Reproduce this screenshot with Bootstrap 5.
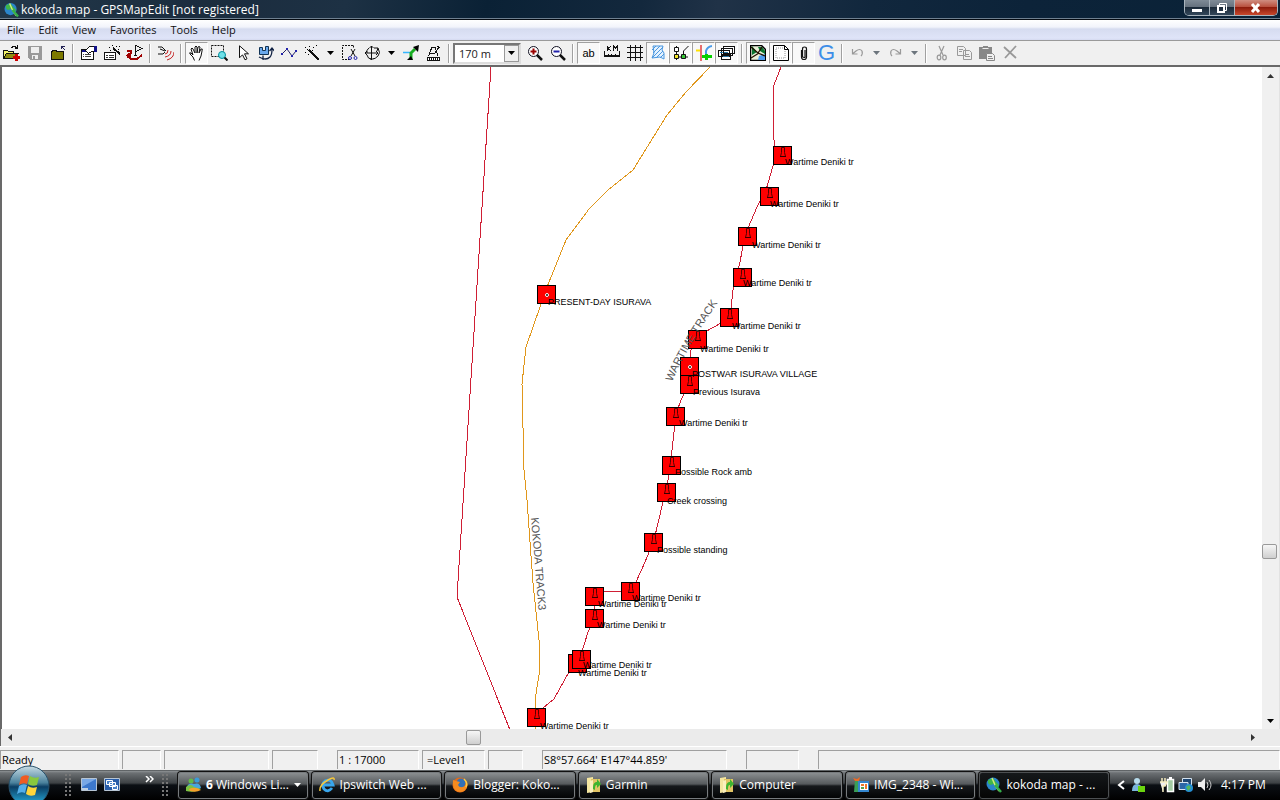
<!DOCTYPE html>
<html lang="en">
<head>
<meta charset="utf-8">
<meta name="viewport" content="width=device-width, initial-scale=1">
<title>kokoda map - GPSMapEdit [not registered]</title>
<link href="https://cdn.jsdelivr.net/npm/bootstrap@5.3.0/dist/css/bootstrap.min.css" rel="stylesheet">
<style>
body{font-family:"Open Sans","Noto Sans",sans-serif;font-size:12px;line-height:16px;color:#000;background:#f0f0f0}
button{font:inherit;border:0;padding:0;background:none;color:inherit}
svg{display:block;flex:none}
.titlebar{height:20px;gap:2px;padding:0 2px 0 4px;background:linear-gradient(100deg,#22384a 0,#1b2c3e 16%,#1d3144 27%,#0a2135 38%,#13283d 50%,#203247 56%,#11273d 68%,#0c2339 80%,#0a2237);border-bottom:1px solid #050b12;box-shadow:inset 0 -1px #6f8090;color:#fff}
.winbtns{height:16px;border:1px solid #a9b4bd;border-top:0;border-radius:0 0 5px 5px;overflow:hidden}
.winbtns button{width:25px;height:15px;background:linear-gradient(#7f8b96 0,#66727f 45%,#1b2a39 50%,#33475a);border-right:1px solid #a9b4bd;display:flex;align-items:center;justify-content:center}
.winbtns .close-btn{width:42px;border:0;background:linear-gradient(#cf8d80 0,#b9503e 45%,#8e1c0c 50%,#c9482c)}
.menubar{height:21px;background:linear-gradient(#fff 0,#f2f4fb 35%,#d6dcf0 45%,#dfe4f8 90%,#d5daf0);border-bottom:1px solid #9a9a9a;padding-left:7px;gap:14px;font-size:11px}
.menubar a{color:#111;text-decoration:none}
.tools{height:24px;background:#f0f0f0}
.tool{width:23px;height:22px;display:flex;align-items:center;justify-content:center}
.tool.pressed{background:#f8f8f8;border:1px solid;border-color:#a0a0a0 #fff #fff #a0a0a0}
.tool-ab{font:11px "Liberation Sans",sans-serif}
.tool-g{font:22px/20px "Liberation Sans",sans-serif;color:#3d8ee8}
.drop{width:15px;height:22px;display:flex;align-items:center;justify-content:center}
.rule{width:8px;height:19px;background:linear-gradient(90deg,transparent 3px,#a0a0a0 3px,#a0a0a0 4px,#fff 4px,#fff 5px,transparent 5px);flex:none}
.combo{width:68px;height:21px;border:2px solid;border-color:#777 #ddd #ddd #777;background:#fff;margin-right:2px}
.combo select{appearance:none;border:0;background:none;width:100%;height:17px;padding:0 0 0 4px;font:11px/17px "Open Sans",sans-serif;outline:0;color:#222}
.combo span{right:0;top:0;width:15px;height:17px;background:#f0f0f0;border:1px solid #999;pointer-events:none}
.workspace{border:solid #696969;border-width:2px 0 0 2px;background:#fff;min-height:0}
.vbar{width:18px;padding-right:1px;background:#f0f0f0;border-right:1px solid #e2e2e2}
.hbar{height:17px;background:#ebebeb;border-left:1px solid #696969;padding-right:19px}
.arrowbtn{width:17px;height:17px;display:flex;align-items:center;justify-content:center;flex:none}
.thumb{width:15px;height:15px;border:1px solid #999;border-radius:2px;background:linear-gradient(#f6f6f6,#cfcfcf);flex:none}
.statusline{height:24px;padding-top:3px;gap:3px;border-top:1px solid #fff;font-size:11px}
.pane{border:solid;border-width:1px 1px 0 1px;border-color:#a0a0a0 #fff #fff #a0a0a0;height:19px;line-height:18px;padding-left:1px;white-space:nowrap;flex:none}
.taskbar{height:30px;background:linear-gradient(#33373a 0,#8e9294 1px,#6c7073 3px,#3d4144 13px,#0b0f14 15px,#000 30px);color:#fff}
.startbtn{left:8px;bottom:-5px;width:44px;height:40px}
.grip{width:8px;height:24px;background:radial-gradient(circle,#777 0,#777 1px,transparent 1px) 0 0/4px 4px;flex:none}
.task{min-width:0;flex:1 1 0;height:27px;border:1px solid #777b7e;border-radius:3px;background:linear-gradient(#8a8e90 0,#565a5d 11px,#16191c 13px,#030405);box-shadow:0 0 0 1px #111;display:flex;align-items:center;gap:4px;padding:0 6px;white-space:nowrap}
.task.current{background:linear-gradient(#15181a,#050505);border-color:#4d5052}
.quick{width:178px;padding-left:64px}
.quick .grip:first-child{margin-right:9px}
.quick .switcher{margin-left:6px}
.quick .more{align-self:flex-start;margin-left:25px;padding-top:3px}
.quick .grip:last-child{margin-left:auto;margin-right:9px}
.tray{width:171px;padding-left:8px}
.tray .person{margin:0 13px 0 6px}
.tray .plug{margin-right:3px}
.maplabel{font:9px "Liberation Sans",sans-serif}
.trackname{font:11px "Liberation Sans",sans-serif;fill:#555}
</style>
<script src="https://cdn.jsdelivr.net/npm/bootstrap@5.3.0/dist/js/bootstrap.bundle.min.js"></script>
</head>
<body class="vh-100 d-flex flex-column overflow-hidden">
<svg width="0" height="0" class="position-absolute" aria-hidden="true">
<defs>
<g id="plainpin"><rect x=".5" y=".5" width="18" height="18" fill="#f00" stroke="#000"/></g>
<g id="pin"><use href="#plainpin"/><path d="M8.500 1.500h3v5l1 4h-5l1-4z" fill="none" stroke="#500"/><path d="M7 10.500h6" stroke="#300"/></g>
<g id="town"><use href="#plainpin"/><circle cx="10" cy="10" r="1.500" fill="#000" stroke="#fff"/></g>
<symbol id="down" viewBox="0 0 7 4"><path d="M0 0h7L3.500 4z" fill="currentColor"/></symbol>
<symbol id="globe" viewBox="0 0 16 16"><circle cx="7" cy="7" r="6.500" fill="#2a86cc"/><path d="M2 3l5-2 3 4 3 3-3 3-2-4-4 1-2-2z" fill="#3fb548"/><path d="M6 1l3 7 4 6" stroke="#d3ee7c" stroke-width="1.500" fill="none"/><path d="M9 8l6 7" stroke="#35b04a" stroke-width="2.500"/></symbol>
<symbol id="foldr" viewBox="0 0 16 16"><path d="M1 1l6-1v15l-6 1z" fill="#f5e6a0"/><path d="M5 2h9v13H5z" fill="#e2c465"/><path d="M4 4l3-1v12l-3 1z" fill="#fbf0bd"/><path d="M7 12c0-5 1-7 4-7V2l4 5-4 4V8c-2 0-2 2-2 5z" fill="#3fb52f"/></symbol>
<linearGradient id="orbfill" x2="0" y2="1"><stop offset="0" stop-color="#c9dde6"/><stop offset=".42" stop-color="#4a819c"/><stop offset=".52" stop-color="#0b3d63"/><stop offset="1" stop-color="#29b6e6"/></linearGradient>
</defs>
</svg>

<header class="titlebar d-flex align-items-center flex-shrink-0">
  <svg width="15" height="16"><use href="#globe"/></svg>
  <span class="flex-grow-1">kokoda map - GPSMapEdit [not registered]</span>
  <div class="winbtns d-flex align-self-start">
    <button aria-label="Minimize"><svg width="12" height="12"><path d="M1 7h10v3H1z" fill="#fff"/></svg></button>
    <button aria-label="Restore"><svg width="12" height="12" fill="none" stroke="#fff"><path d="M3.500 3V1.500h7v7H9"/><path d="M2 4h6v6H2z" stroke-width="2"/></svg></button>
    <button class="close-btn" aria-label="Close"><svg width="12" height="12"><path d="M2 2l7 8M9 2l-7 8" stroke="#fff" stroke-width="3"/></svg></button>
  </div>
</header>

<nav class="menubar d-flex align-items-center flex-shrink-0">
  <a href="#">File</a><a href="#">Edit</a><a href="#">View</a><a href="#">Favorites</a><a href="#">Tools</a><a href="#">Help</a>
</nav>

<div class="tools d-flex align-items-center flex-shrink-0" role="toolbar">
  <button class="tool" aria-label="Open"><svg width="17" height="16" shape-rendering="crispEdges"><path d="M.5 13.500v-8h4l1 1h5v2" fill="#f2f26a" stroke="#111"/><path d="M.5 13.500l3-5h12l-3 5z" fill="#8f8c10" stroke="#111"/><path d="M8 2.500h1v-1h3v1h2M14.500 0v4M12 3.500h3" stroke="#111" fill="none"/><path d="M13.500 9v7M10 12.500h7" stroke="#c00" stroke-width="3"/></svg></button>
  <button class="tool" aria-label="Save"><svg width="16" height="16" shape-rendering="crispEdges"><path d="M1 1h14v14H3l-2-2z" fill="#999"/><path d="M4 2h8v6H4zM5 10h6v4H5z" fill="#eee"/><path d="M6 11h2v3H6z" fill="#999"/></svg></button>
  <button class="tool" aria-label="Close map"><svg width="16" height="16" shape-rendering="crispEdges"><path d="M1.500 14.500v-8h1v-1h4v1h7v8z" fill="#7d7a00" stroke="#111"/><path d="M11 1.500h3.500M11.500 1v3M12 2l3 3" stroke="#225" fill="none"/></svg></button>
  <span class="rule"></span>
  <button class="tool" aria-label="Properties"><svg width="16" height="16" shape-rendering="crispEdges"><path d="M.5 4.500h12v10H.5z" fill="#fff" stroke="#111"/><path d="M1 5h7v2H1z" fill="#118"/><path d="M2 9.500h1m1 0h6M2 11.500h1m1 0h6" stroke="#444"/><path d="M4.500 5.500l4-4h5v5h-3l-3 2z" fill="#fff" stroke="#111"/><path d="M13 1h3v6h-3z" fill="#118"/></svg></button>
  <button class="tool" aria-label="Map wizard"><svg width="16" height="16" shape-rendering="crispEdges"><path d="M.5 7.500h11v7H.5z" fill="#fff" stroke="#111"/><path d="M2 10.500h2m1 0h5M2 12.500h2m1 0h5" stroke="#333"/><path d="M9 3l7 6" stroke="#111" stroke-width="2"/><path d="M5 2h1v1H5zM8 0h1v1H8zM12 1h1v1h-1zM6 5h1v1H6zM14 4h1v1h-1zM15 1h1v1h-1z"/></svg></button>
  <button class="tool" aria-label="Waypoints"><svg width="17" height="16" shape-rendering="crispEdges"><path d="M9.500 0v10M10 .5l6 3-6 3M8 10.500h3" stroke="#111" fill="none"/><path d="M1 6h4v2L2 10l3 1M1 11l4 3h6l5-4" stroke="#a00000" stroke-width="2" fill="none"/></svg></button>
  <span class="rule"></span>
  <button class="tool" aria-label="GPS"><svg width="16" height="16"><path d="M0 2h4l4 4M0 9h5l2-2M2 4l5 2" fill="none" stroke="#111"/><path d="M7 9q3 0 3-4M7 12q6-1 6-6M9 15q7-2 7-8" fill="none" stroke="#c42020"/></svg></button>
  <span class="rule"></span>
  <button class="tool pressed" aria-label="Pan"><svg width="16" height="16"><path d="M5.500 15.500L4 12 1 9q-1-2 1-1l2 2-2-6q1-2 2 0l2 4V2q1-2 2 0v6l1-6q1-1 2 0l-1 6 2-4q2-1 1 2l-1 5-2 4.500" fill="#fff" stroke="#111"/></svg></button>
  <button class="tool" aria-label="Zoom rectangle"><svg width="17" height="16"><path d="M.5.500h12v11H.5z" fill="none" stroke="#111" stroke-dasharray="2 1"/><circle cx="11" cy="10" r="3.500" fill="#6fe0e8" stroke="#0090a0"/><path d="M13.500 12.500l3 3" stroke="#111" stroke-width="2"/></svg></button>
  <button class="tool" aria-label="Select"><svg width="16" height="16"><path d="M4.500.8v12l3-3 2.500 5 2-1-2.500-5h4z" fill="#fff" stroke="#111"/></svg></button>
  <button class="tool" aria-label="Rotate object"><svg width="16" height="16"><path d="M1.500 2.500h3v3h3v-4h3v8h-9z" fill="#6aa9ee" stroke="#135"/><path d="M1 12q7 4 11 0 2-2 2-8M11.500 6L14 3l2.500 3M5 10.500v4.500" fill="none" stroke="#124" stroke-width="1.300"/></svg></button>
  <button class="tool" aria-label="Polyline"><svg width="16" height="16"><path d="M1 9l5-5 5 7 4-5" fill="none" stroke="#226"/><path d="M0 8h2v2H0zM5 3h2v2H5zM10 10h2v2h-2zM14 5h2v2h-2z" fill="#22a"/></svg></button>
  <button class="tool" aria-label="Wizard"><svg width="16" height="16" shape-rendering="crispEdges"><path d="M5 5l10 10" stroke="#111" stroke-width="2"/><path d="M1 2h1v1H1zM5 1h1v1H5zM9 2h1v1H9zM3 4h1v1H3zM8 5h1v1H8zM1 7h1v1H1zM4 9h1v1H4zM12 0h1v1h-1z"/></svg></button>
  <button class="drop" aria-label="Wizard options"><svg width="7" height="4"><use href="#down"/></svg></button>
  <button class="tool" aria-label="Trim"><svg width="16" height="16"><path d="M11 .5H.5v14h8M11.500.5v3" fill="none" stroke="#111" stroke-dasharray="2 1"/><path d="M9 4l4 7M13 4l-4 7" stroke="#111"/><circle cx="8" cy="13" r="1.500" fill="none" stroke="#22a"/><circle cx="13.500" cy="13" r="1.500" fill="none" stroke="#22a"/></svg></button>
  <button class="tool" aria-label="Move map"><svg width="17" height="16"><path d="M7.500 1v14M1 8h13M5.500 3l2-2 2 2M5.500 13l2 2 2-2M3 6L1 8l2 2M12 6l2 2-2 2" fill="none" stroke="#111"/><path d="M10 3h4l-1 3M14 3q3 5 0 8-3 3-5 3M5 3Q2 5 3 8M3 10q1 4 4 4" fill="none" stroke="#111"/></svg></button>
  <button class="drop" aria-label="Move options"><svg width="7" height="4"><use href="#down"/></svg></button>
  <button class="tool" aria-label="Connect"><svg width="16" height="16"><path d="M0 7.500h8" stroke="#36b6ff" stroke-width="1.500"/><path d="M8 15V8l4-4" fill="none" stroke="#18ad20" stroke-width="3"/><path d="M10 2l6-2-1 7z"/><path d="M4 15h6l-2-4z"/></svg></button>
  <button class="tool" aria-label="Measure"><svg width="16" height="16" shape-rendering="crispEdges"><path d="M1.500 12.500h12v3h-12z" fill="#fff" stroke="#111"/><path d="M3.500 13v2m2-2v2m2-2v2m2-2v2m2-2v2" stroke="#111"/><path d="M2.500 11L6 2h3l3 9M4 8h5M9 8l4-6M11 1l3 2" fill="none" stroke="#111"/></svg></button>
  <span class="rule"></span>
  <div class="combo position-relative"><select aria-label="Scale"><option>170 m</option></select><span class="position-absolute d-flex align-items-center justify-content-center"><svg width="7" height="4"><use href="#down"/></svg></span></div>
  <button class="tool" aria-label="Zoom in"><svg width="16" height="16"><circle cx="6.500" cy="6.500" r="5" fill="#fff" stroke="#112"/><path d="M10 10l5 5" stroke="#111" stroke-width="2.500"/><path d="M3.500 6.500h6M6.500 3.500v6" stroke="#900" stroke-width="2"/></svg></button>
  <button class="tool" aria-label="Zoom out"><svg width="16" height="16"><circle cx="6.500" cy="6.500" r="5" fill="#fff" stroke="#112"/><path d="M10 10l5 5" stroke="#111" stroke-width="2.500"/><path d="M3.500 6.500h6" stroke="#22a" stroke-width="2"/></svg></button>
  <span class="rule"></span>
  <button class="tool pressed tool-ab">ab</button>
  <button class="tool" aria-label="Ruler KM"><svg width="18" height="16" shape-rendering="crispEdges"><path d="M4.500 1v5M8 1L5 3.500 8 6M10.500 6V1l2 2 2-2v5" fill="none" stroke="#111"/><path d="M1.500 6v5h15V6M5.500 9v2m3-2v2m4-2v2M1 10.500h16" fill="none" stroke="#111"/></svg></button>
  <button class="tool" aria-label="Grid"><svg width="16" height="16" shape-rendering="crispEdges"><path d="M3.500 0v16M8.500 0v16M13.500 0v16M0 2.500h16M0 7.500h16M0 12.500h16" stroke="#111"/></svg></button>
  <button class="tool pressed" aria-label="Polygons"><svg width="14" height="16"><path d="M2 1h10l-1 4 2 3v6l-4-2-8 1 2-5z" fill="#e4f2ff"/><path d="M1 5l4-4M2 8l7-7M1 13L12 2M5 13l7-7M9 13l4-4M2 1h10l-1 4 2 3v6l-4-2-8 1 2-5z" fill="none" stroke="#4a97df"/></svg></button>
  <button class="tool pressed" aria-label="Nodes"><svg width="16" height="16"><path d="M3.500 1v14M4 12h11M10.500 12V6l5-5" fill="none" stroke="#111"/><path d="M1.500 2.500h4v4h-4z" fill="#fff" stroke="#111"/><path d="M1.500 9.500h4v4h-4z" fill="#f3e629" stroke="#111"/><path d="M8.500 9.500h4v4h-4z" fill="#36c636" stroke="#111"/></svg></button>
  <button class="tool pressed" aria-label="Roads"><svg width="16" height="16"><path d="M0 5.500h4" stroke="#ffe100" stroke-width="2"/><path d="M5 0v16" stroke="#e04040" stroke-width="1.500"/><path d="M10 11V6q1-4 6-5" fill="none" stroke="#4a9be8" stroke-width="2"/><path d="M6 11.500h10M10.500 9v6" stroke="#08d000" stroke-width="3"/></svg></button>
  <button class="tool pressed" aria-label="Windows"><svg width="17" height="16" shape-rendering="crispEdges"><g fill="#fff" stroke="#111"><path d="M5.500 1.500h11v7h-11zM3.500 3.500h11v7h-11zM.5 5.500h11v6H.5zM3.500 9.500h9v5h-9z"/></g><path d="M2 7.500h3m1 0h4M5 11.500h6" stroke="#2877a8"/></svg></button>
  <span class="rule"></span>
  <button class="tool pressed" aria-label="Background map"><svg width="16" height="16"><path d="M.5.500h11l4 4v11H.5z" fill="#e9efd8" stroke="#000" stroke-width="1.500"/><path d="M2 1l5 6-5 3zM8 2h4l3 4v3l-5-3z" fill="#08752f"/><path d="M8 15l1-4 6-2v6z" fill="#4d9df0"/><path d="M1 2l7 6 7 3M8 8l4-6M1 13l8-5" fill="none" stroke="#210" stroke-width="1.300"/></svg></button>
  <button class="tool pressed" aria-label="Blank map"><svg width="16" height="16"><path d="M.5.500h11l4 4v11H.5z" fill="#fff" stroke="#000"/><path d="M3 3h9v10H3z" fill="none" stroke="#999" stroke-dasharray="1 1"/><path d="M11.500.5v4h4" fill="none" stroke="#000"/></svg></button>
  <button class="tool pressed" aria-label="Attachments"><svg width="16" height="16"><path d="M5.500 5v7q0 2.500 2.500 2.500t2.500-2.500V4Q10.500 2 8.500 2T6.500 4v7q0 1.500 1.500 1.500T9 11V5" fill="none" stroke="#111" stroke-width="1.200"/></svg></button>
  <button class="tool tool-g">G</button>
  <span class="rule"></span>
  <button class="tool" aria-label="Undo" disabled><svg width="16" height="16"><path d="M2.500 4v5h5M3 8.500L6 6q4-3 6 0 1 3-1 5" fill="none" stroke="#999" stroke-width="1.200"/></svg></button>
  <button class="drop text-secondary" aria-label="Undo list" disabled><svg width="7" height="4"><use href="#down"/></svg></button>
  <button class="tool" aria-label="Redo" disabled><svg width="16" height="16"><path d="M12.500 4v5h-5M12 8.500L9 6Q5 3 3 6q-1 3 1 5" fill="none" stroke="#999" stroke-width="1.200"/></svg></button>
  <button class="drop text-secondary" aria-label="Redo list" disabled><svg width="7" height="4"><use href="#down"/></svg></button>
  <span class="rule"></span>
  <button class="tool" aria-label="Cut" disabled><svg width="14" height="16" fill="none" stroke="#999" stroke-width="1.200"><path d="M4 1l4 9M9 1L5 10"/><ellipse cx="4" cy="12.500" rx="1.800" ry="2.300"/><ellipse cx="9.500" cy="12.500" rx="1.800" ry="2.300"/></svg></button>
  <button class="tool" aria-label="Copy" disabled><svg width="16" height="16" fill="#f0f0f0" stroke="#999"><path d="M.5 1.500h6l2 2v7h-8zM6.500 5.500h6l2 2v7h-8z"/><path d="M2 4.500h4M2 6.500h3M8 9.500h4M8 11.500h5"/></svg></button>
  <button class="tool" aria-label="Paste" disabled><svg width="17" height="16"><path d="M0 2h4V1h5v1h4v12H0z" fill="#888"/><path d="M3.500 3.500h6" stroke="#eee"/><path d="M7.500 8.500h6l2 2v5h-8z" fill="#f0f0f0" stroke="#888"/><path d="M9 11.500h4M9 13.500h5" stroke="#888"/></svg></button>
  <button class="tool" aria-label="Delete" disabled><svg width="16" height="16"><path d="M1 2l12 11M13 1L2 13" stroke="#999" stroke-width="1.800"/></svg></button>
</div>

<main class="workspace d-flex flex-grow-1">
  <div class="flex-grow-1 overflow-hidden">
    <svg width="100%" height="100%" role="img" aria-label="Map">
      <g transform="translate(-2,-67)">
        <g fill="none" shape-rendering="crispEdges">
          <path stroke="#cf1f35" d="M491 67L457 597L510 730"/>
          <path stroke="#e0971c" d="M710 67L686 92L667 115L633 170L608 190L589 209L566 240L547 287L526 347L522 384L524 470L527 500L533 583L539 640V675L535 700V730"/>
          <path stroke="#cf1f35" d="M781 67L774 85L773 100V130L775 150L773 166L766 190L757 207L748 228L743 246L740 262L733 290L730 318L705 332L697 340L691 350L689 385L681 400L676 414L672 450L671 466L667 485L654 540L645 562L636 582L630 591H594V618L588 632L581 655L569 672L554 699L543 708L536 717"/>
        </g>
        <path id="wt" d="M672 382Q688 345 719 301" fill="none"/>
        <path id="kt" d="M531 518Q535 565 540 630" fill="none"/>
        <use href="#pin" x="773" y="146"/><use href="#pin" x="760" y="187"/><use href="#pin" x="738" y="227"/><use href="#pin" x="733" y="268"/><use href="#pin" x="720" y="308"/><use href="#pin" x="688" y="330"/><use href="#town" x="680" y="357"/><use href="#pin" x="680" y="375"/><use href="#pin" x="666" y="407"/><use href="#pin" x="662" y="456"/><use href="#pin" x="657" y="483"/><use href="#pin" x="644" y="533"/><use href="#pin" x="621" y="582"/><use href="#pin" x="585" y="587"/><use href="#pin" x="585" y="609"/><use href="#plainpin" x="568" y="654"/><use href="#pin" x="572" y="650"/><use href="#pin" x="527" y="708"/><use href="#town" x="537" y="285"/>
        <text class="trackname"><textPath href="#wt">WARTIME TRACK</textPath></text>
        <text class="trackname"><textPath href="#kt">KOKODA TRACK3</textPath></text>
        <g class="maplabel">
          <text x="785" y="165">Wartime Deniki tr</text><text x="770" y="207">Wartime Deniki tr</text><text x="752" y="248">Wartime Deniki tr</text><text x="743" y="286">Wartime Deniki tr</text><text x="732" y="329">Wartime Deniki tr</text><text x="700" y="352">Wartime Deniki tr</text><text x="692" y="377">POSTWAR ISURAVA VILLAGE</text><text x="693" y="395">Previous Isurava</text><text x="679" y="426">Wartime Deniki tr</text><text x="675" y="475">Possible Rock amb</text><text x="667" y="504">Creek crossing</text><text x="657" y="553">Possible standing</text><text x="632" y="601">Wartime Deniki tr</text><text x="598" y="607">Wartime Deniki tr</text><text x="597" y="628">Wartime Deniki tr</text><text x="583" y="668">Wartime Deniki tr</text><text x="578" y="676">Wartime Deniki tr</text><text x="540" y="729">Wartime Deniki tr</text><text x="548" y="305">PRESENT-DAY ISURAVA</text>
        </g>
      </g>
    </svg>
  </div>
  <div class="vbar d-flex flex-column flex-shrink-0">
    <button class="arrowbtn" aria-label="Scroll up"><svg width="7" height="4"><path d="M0 4h7L3.500 0z" fill="#333"/></svg></button>
    <span style="flex-grow:460"></span><span class="thumb"></span><span style="flex-grow:153"></span>
    <button class="arrowbtn" aria-label="Scroll down"><svg width="7" height="4"><use href="#down"/></svg></button>
  </div>
</main>
<div class="hbar d-flex align-items-center flex-shrink-0">
  <button class="arrowbtn" aria-label="Scroll left"><svg width="4" height="7"><path d="M4 0v7L0 3.500z" fill="#333"/></svg></button>
  <span style="flex-grow:448"></span><span class="thumb"></span><span style="flex-grow:763"></span>
  <button class="arrowbtn" aria-label="Scroll right"><svg width="4" height="7"><path d="M0 0v7l4-3.500z" fill="#333"/></svg></button>
</div>

<footer class="statusline d-flex flex-shrink-0">
  <div class="pane" style="width:119px">Ready</div><div class="pane" style="width:39px"></div><div class="pane" style="width:105px"></div><div class="pane me-3" style="width:46px"></div>
  <div class="pane" style="width:82px">1 : 17000</div><div class="pane ps-1" style="width:63px">=Level1</div><div class="pane me-3" style="width:35px"></div>
  <div class="pane me-3" style="width:185px">S8°57.664' E147°44.859'</div><div class="pane me-3" style="width:53px"></div><div class="pane flex-grow-1"></div>
</footer>

<div class="taskbar d-flex align-items-center position-relative flex-shrink-0">
  <button class="startbtn position-absolute" aria-label="Start"><svg width="44" height="44"><circle cx="21" cy="21" r="20" fill="url(#orbfill)" stroke="#28516b"/><path d="M13 12q4-3 8-1l-2 8q-4-2-8 1z" fill="#ef5c23"/><path d="M22 11q4 3 9 1l-2 8q-5 2-9-1z" fill="#89c83e"/><path d="M11 21q4-3 8-1l-2 8q-4-2-8 1z" fill="#54aee9"/><path d="M20 21q4 3 9 1l-2 8q-5 2-9-1z" fill="#ffd53b"/></svg></button>
  <div class="d-flex align-items-center flex-shrink-0 quick">
    <span class="grip"></span>
    <button aria-label="Show desktop"><svg width="17" height="14"><path d="M.5.500h15v12H.5z" fill="#3d78cc" stroke="#b7c5d4"/><path d="M1 1h14l-14 8z" fill="#79a8e6"/><path d="M1 10h6v2H1z" fill="#bed0e4"/></svg></button>
    <button class="switcher" aria-label="Switch windows"><svg width="16" height="14"><path d="M.5.500h15v12H.5z" fill="#285ca8" stroke="#b7c5d4"/><path d="M2.500 2.500h6v4h-6zM5.500 4.500h6v4h-6zM8.500 7.500h5v4h-5z" fill="#477fc8" stroke="#fff"/></svg></button>
    <button class="more" aria-label="More"><svg width="9" height="7"><path d="M1 0l3 3-3 3M5 0l3 3-3 3" fill="none" stroke="#fff" stroke-width="1.500"/></svg></button>
    <span class="grip"></span>
  </div>
  <div class="d-flex flex-grow-1 gap-1">
    <button class="task"><svg width="17" height="16"><circle cx="6" cy="4" r="2.500" fill="#62bb47"/><circle cx="12" cy="3" r="2.500" fill="#3b9bd8"/><path d="M1 12q2-7 8-5 6-2 7 4l-4 2z" fill="#49a6dd"/><path d="M1 10q5-4 8 0l7 2q-6 4-15 2z" fill="#7cc342"/><path d="M4 12q6-3 12 1-5 3-11 1z" fill="#f5a12b"/></svg><span><b>6</b> Windows Li...</span><svg class="ms-auto" width="7" height="4"><use href="#down"/></svg></button>
    <button class="task"><svg width="17" height="16"><path d="M13 11q-4 5-8 1-3-5 1-8 6-3 8 4H5" fill="none" stroke="#38a6ed" stroke-width="2.800"/><path d="M1 14Q0 8 9 3q7-4 6 0" fill="none" stroke="#f6c83d" stroke-width="1.500"/></svg><span>Ipswitch Web ...</span></button>
    <button class="task"><svg width="17" height="16"><circle cx="8" cy="8" r="7.500" fill="#e66b14"/><circle cx="9" cy="6" r="4.500" fill="#3271b8"/><path d="M1 3l3 1 4 1-2 3q2 4 7 1l2-5q2 9-6 11Q0 15 1 3z" fill="#f58b1f"/><path d="M12 2q4 4 2 8" stroke="#ffce43" stroke-width="1.500" fill="none"/></svg><span>Blogger: Koko...</span></button>
    <button class="task"><svg width="16" height="16"><use href="#foldr"/></svg><span>Garmin</span></button>
    <button class="task"><svg width="16" height="16"><use href="#foldr"/></svg><span>Computer</span></button>
    <button class="task"><svg width="17" height="16"><path d="M2 3h3v12H1z" fill="#3a9e57"/><path d="M0 1l4 1 3-2-1 4H2z" fill="#ed6a25"/><path d="M5 4h11v11H5z" fill="#3386cf"/><path d="M7 6h8v7H7z" fill="#fff"/><path d="M8 7h3v2H8zM12 7h2v5h-2z" fill="#ee762a"/><path d="M8 10h3v2H8z" fill="#58a44a"/></svg><span>IMG_2348 - Wi...</span></button>
    <button class="task current"><svg width="16" height="16"><use href="#globe"/></svg><span>kokoda map - ...</span></button>
  </div>
  <div class="tray d-flex align-items-center flex-shrink-0">
    <button aria-label="Show hidden icons"><svg width="8" height="10"><path d="M7 1L2 5l5 4" fill="none" stroke="#fff" stroke-width="2"/></svg></button>
    <svg class="person" width="16" height="16"><circle cx="6" cy="4" r="3" fill="#b7dced"/><path d="M1 14q0-7 5-7t5 7z" fill="#79b5dc"/><path d="M7 9h7v6H7z" fill="#6bd50f"/></svg>
    <svg class="plug" width="15" height="16"><path d="M7.500 2.500h6v12h-6z" fill="#a3cba3" stroke="#fff" stroke-width="1.500"/><path d="M9 1h3" stroke="#fff" stroke-width="2"/><path d="M2 1v4m3-4v4M0 5h7l-2 4H3v6" fill="#eee" stroke="#f6edc0" stroke-width="1.500"/></svg>
    <svg class="me-1" width="15" height="16"><path d="M4.500 1.500h9v7h-9z" fill="#1f4773" stroke="#d4e2ef"/><path d="M1 5.500h9v7H1z" fill="#2e67a7" stroke="#d4e2ef"/><circle cx="11" cy="11" r="4" fill="#248ed4"/><path d="M8 10l3-2 2 3-3 3z" fill="#55b75c"/></svg>
    <svg width="16" height="16"><path d="M1 5h3l4-4v13l-4-4H1z" fill="#eee"/><path d="M10 5q2 3 0 6M12 3q4 5 0 10" fill="none" stroke="#ccc"/></svg>
    <time class="ms-2">4:17 PM</time>
  </div>
</div>
</body>
</html>
